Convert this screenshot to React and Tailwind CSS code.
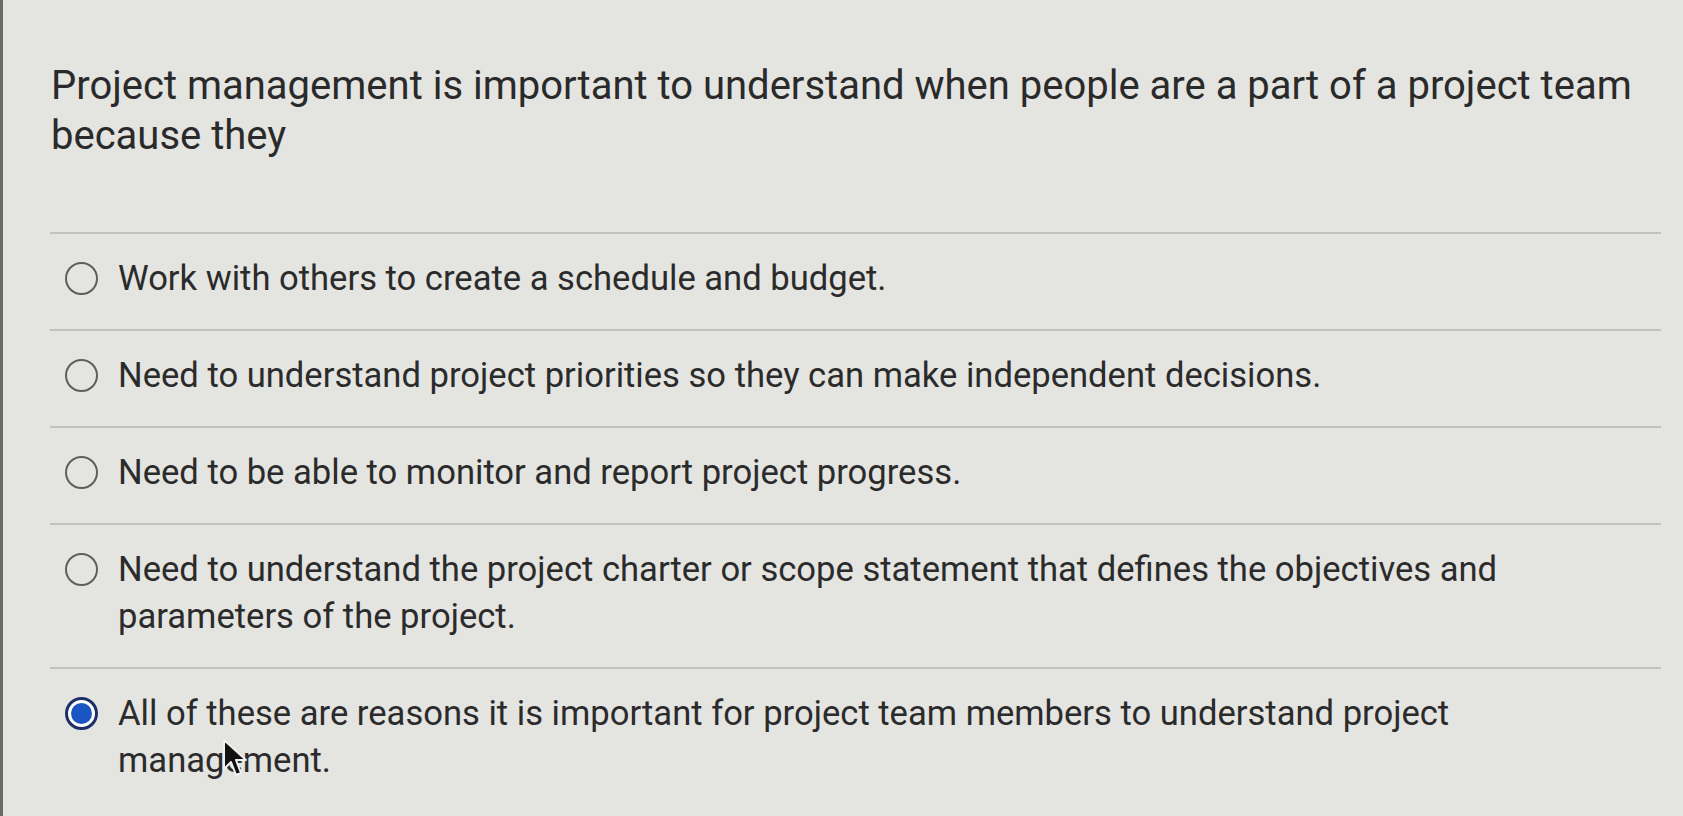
import React from "react";

const options = [
  { id: 1, text: "Work with others to create a schedule and budget." },
  {
    id: 2,
    text: "Need to understand project priorities so they can make independent decisions.",
  },
  { id: 3, text: "Need to be able to monitor and report project progress." },
  {
    id: 4,
    text: "Need to understand the project charter or scope statement that defines the objectives and parameters of the project.",
  },
  {
    id: 5,
    text: "All of these are reasons it is important for project team members to understand project management.",
  },
];

const Radio = ({ checked }) => {
  if (checked) {
    return (
      <span className="mt-[7px] flex h-[33px] w-[33px] shrink-0 items-center justify-center rounded-full border-[3px] border-[#1d2f66] bg-white">
        <span className="h-[21px] w-[21px] rounded-full bg-[#1b55c4]" />
      </span>
    );
  }
  return (
    <span className="mt-[7px] h-[33px] w-[33px] shrink-0 rounded-full border-[2.5px] border-[#5e5e5e]" />
  );
};

// mouse pointer sitting over the last answer
const Cursor = () => (
  <svg width="26" height="40" viewBox="0 0 26 40">
    <path
      d="M2 2 L2 31 L9 24 L14 37 L19 35 L14 22 L24 22 Z"
      fill="#111"
      stroke="#f0f0ee"
      strokeWidth="2"
      strokeLinejoin="round"
    />
  </svg>
);

const Option = ({ text, checked, last }) => {
  return (
    <div className="relative flex items-start gap-[20px] border-t-2 border-[#c2c2be] pb-[27px] pl-[15px] pt-[21px]">
      <Radio checked={checked} />
      <p className="max-w-[1430px] text-[34.6px] leading-[47px] text-[#2b2b2b]">
        {text}
      </p>
      {last && (
        <div className="absolute left-[172px] top-[69px]">
          <Cursor />
        </div>
      )}
    </div>
  );
};

const App = () => {
  const selected = 5;
  return (
    <div
      className="h-[816px] overflow-hidden border-l-[3px] border-[#6a6a68] bg-[#e4e4e1]"
      style={{ fontFamily: "Roboto, 'Noto Sans', sans-serif" }}
    >
      <h1 className="pl-[48px] pr-[20px] pt-[61px] text-[40px] font-normal leading-[50px] text-[#2a2a2a]">
        Project management is important to understand when people are a part of
        a project team because they
      </h1>
      <div className="ml-[47px] mr-[22px] mt-[71px]">
        {options.map((option) => (
          <Option
            key={option.id}
            text={option.text}
            checked={option.id === selected}
            last={option.id === options.length}
          />
        ))}
      </div>
    </div>
  );
};

export default App;
